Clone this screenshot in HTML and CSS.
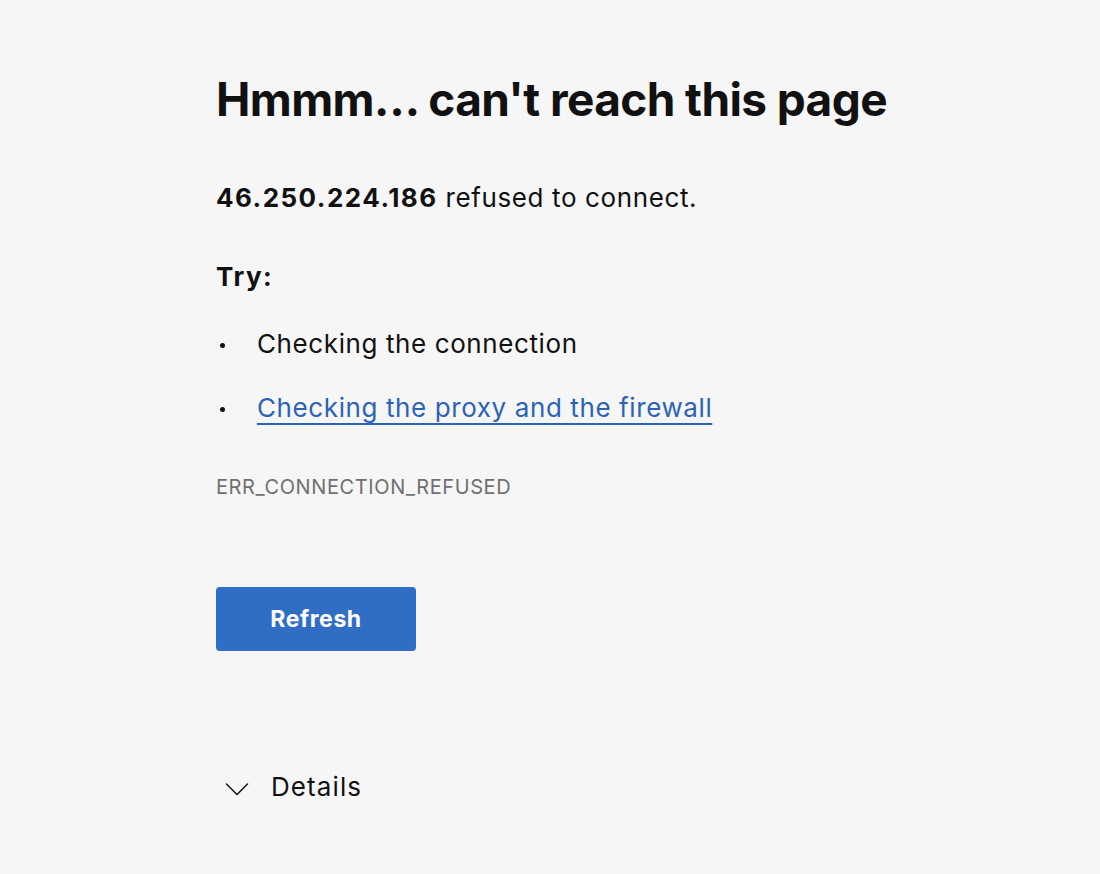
FILE: index.html
```html
<!DOCTYPE html>
<html lang="en">
<head>
<meta charset="utf-8">
<title>Can't reach this page</title>
<link rel="stylesheet" href="styles.css">
</head>
<body>
<main class="page">
  <h1 class="title">Hmmm… can't reach this page</h1>
  <p class="lead"><strong class="host">46.250.224.186</strong> refused to connect.</p>
  <p class="try">Try:</p>
  <ul class="tips">
    <li class="tip"><span class="dot"></span><span>Checking the connection</span></li>
    <li class="tip"><span class="dot"></span><a class="link" href="#">Checking the proxy and the firewall</a></li>
  </ul>
  <p class="code">ERR_CONNECTION_REFUSED</p>
  <button class="refresh" type="button">Refresh</button>
  <div class="details">
    <svg class="chev" width="24" height="14" viewBox="0 0 24 14" aria-hidden="true">
      <path d="M1.5 2 L12 12.5 L22.5 2" fill="none" stroke="#1a1a1a" stroke-width="1.6" stroke-linecap="round" stroke-linejoin="round"/>
    </svg>
    <span>Details</span>
  </div>
</main>
</body>
</html>
```

FILE: styles.css
```css
html, body {
  margin: 0;
  padding: 0;
  background: #f6f6f6;
}
body {
  font-family: Inter, "Liberation Sans", sans-serif;
  color: #111111;
}
.page {
  padding: 72px 0 40px 216px;
}
.title {
  margin: 0;
  font-size: 46px;
  line-height: 55.2px;
  font-weight: 700;
  letter-spacing: -0.6px;
  white-space: nowrap;
  color: #111111;
}
.lead {
  margin: 53px 0 0;
  font-size: 26px;
  line-height: 36.4px;
  letter-spacing: 0.62px;
}
.host {
  font-weight: 700;
  letter-spacing: 1.45px;
}
.try {
  margin: 42px 0 0;
  font-size: 26px;
  line-height: 36.4px;
  font-weight: 700;
  letter-spacing: 1.5px;
}
.tips {
  list-style: none;
  margin: 31px 0 0;
  padding: 0;
  display: flex;
  flex-direction: column;
  gap: 27.6px;
}
.tip {
  display: flex;
  align-items: center;
  font-size: 26px;
  line-height: 36.4px;
  letter-spacing: 0.6px;
}
.dot {
  width: 5px;
  height: 5px;
  border-radius: 50%;
  background: #111111;
  margin: 3px 32px 0 4px;
  flex: none;
}
.link {
  color: #2b63b6;
  text-decoration: underline;
  text-decoration-thickness: 2px;
  text-underline-offset: 6px;
}
.code {
  margin: 47px 0 0;
  font-size: 20px;
  line-height: 28px;
  letter-spacing: 0.6px;
  color: #707070;
}
.refresh {
  display: block;
  margin-top: 86px;
  width: 200px;
  height: 64px;
  border: none;
  border-radius: 4px;
  background: #2f6ec4;
  color: #ffffff;
  font-family: Inter, "Liberation Sans", sans-serif;
  font-size: 23px;
  font-weight: 700;
  letter-spacing: 0.6px;
  cursor: pointer;
}
.details {
  margin-top: 118px;
  display: flex;
  align-items: center;
  gap: 22px;
  font-size: 26px;
  line-height: 36.4px;
  letter-spacing: 1.1px;
  padding-left: 9px;
}
.chev {
  flex: none;
  margin-top: 2px;
}
```
